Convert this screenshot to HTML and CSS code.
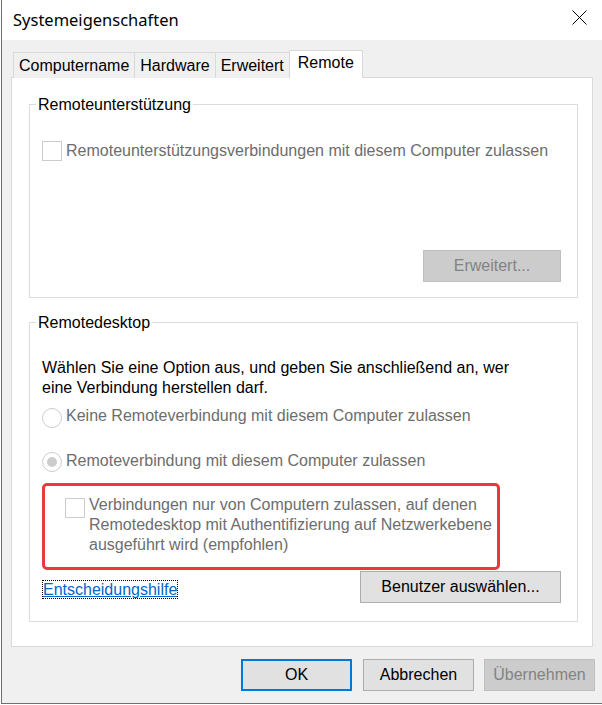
FILE: index.html
```html
<!DOCTYPE html>
<html lang="de">
<head>
<meta charset="utf-8">
<title>Systemeigenschaften</title>
<link rel="stylesheet" href="styles.css">
</head>
<body>
<div class="window">
  <div class="titlebar">
    <span class="title">Systemeigenschaften</span>
    <svg class="close" width="15" height="15" viewBox="0 0 15 15"><path d="M0.5 0.5 L14.5 14.5 M14.5 0.5 L0.5 14.5" stroke="#000" stroke-width="1" fill="none"/></svg>
  </div>
  <div class="main">
    <div class="tabs">
      <div class="tab">Computername</div>
      <div class="tab">Hardware</div>
      <div class="tab">Erweitert</div>
      <div class="tab active">Remote</div>
    </div>
    <div class="panel">
      <div class="group g1">
        <div class="group-title">Remoteunterstützung</div>
        <div class="check-row disabled g1-row">
          <span class="checkbox"></span><span class="label">Remoteunterstützungsverbindungen mit diesem Computer zulassen</span>
        </div>
        <div class="g1-actions"><button class="btn btn-disabled btn-erweitert">Erweitert...</button></div>
      </div>
      <div class="group g2">
        <div class="group-title">Remotedesktop</div>
        <p class="desc">Wählen Sie eine Option aus, und geben Sie anschließend an, wer<br>eine Verbindung herstellen darf.</p>
        <div class="radio-row disabled r1"><span class="radio"></span><span class="label">Keine Remoteverbindung mit diesem Computer zulassen</span></div>
        <div class="radio-row disabled r2"><span class="radio checked"></span><span class="label">Remoteverbindung mit diesem Computer zulassen</span></div>
        <div class="highlight">
          <div class="check-row disabled nla-row"><span class="checkbox"></span><span class="label">Verbindungen nur von Computern zulassen, auf denen<br>Remotedesktop mit Authentifizierung auf Netzwerkebene<br>ausgeführt wird (empfohlen)</span></div>
        </div>
        <div class="bottom-row">
          <a class="link" href="#">Entscheidungshilfe</a>
          <button class="btn btn-users">Benutzer auswählen...</button>
        </div>
      </div>
    </div>
  </div>
  <div class="footer">
    <button class="btn btn-footer btn-ok">OK</button>
    <button class="btn btn-footer btn-cancel">Abbrechen</button>
    <button class="btn btn-footer btn-disabled btn-apply">Übernehmen</button>
  </div>
</div>
</body>
</html>
```
FILE: styles.css
```css
html, body {
  margin: 0;
  padding: 0;
  background: #ffffff;
}

body {
  font-family: "Liberation Sans", Arial, sans-serif;
  font-size: 16px;
  color: #000;
}

.window {
  margin-left: 1px;
  width: 600px;
  height: 703px;
  border-left: 1px solid #6f6f6f;
  border-bottom: 1px solid #6f6f6f;
  background: #f0f0f0;
  display: flex;
  flex-direction: column;
}

.titlebar {
  height: 40px;
  flex: none;
  background: #ffffff;
  display: flex;
  justify-content: space-between;
  align-items: flex-start;
  padding: 0 15px 0 11px;
  box-sizing: border-box;
}

.title {
  font-family: "Noto Sans", "Open Sans", sans-serif;
  font-size: 16.5px;
  line-height: 22px;
  margin-top: 9px;
}

.close {
  margin-top: 10px;
  display: block;
}

.main {
  padding: 10px 9px 0;
}

.tabs {
  display: flex;
  align-items: flex-end;
  height: 28px;
  padding-left: 2px;
}

.tab {
  height: 26px;
  box-sizing: border-box;
  border: 1px solid #d9d9d9;
  border-bottom: none;
  padding: 3px 5px 0 5px;
  line-height: 20px;
  background: #f0f0f0;
  margin-left: -1px;
  white-space: nowrap;
}

.tab:first-child {
  margin-left: 0;
}

.tab.active {
  height: 28px;
  background: #ffffff;
  position: relative;
  z-index: 1;
  padding: 2px 8px 0 8px;
}

.panel {
  margin-top: -1px;
  height: 570px;
  box-sizing: border-box;
  background: #ffffff;
  border: 1px solid #d9d9d9;
  padding: 26px 14px 0 17px;
}

.group {
  border: 1px solid #dcdcdc;
  padding: 0 16px 15px 12px;
}

.group-title {
  width: fit-content;
  margin: -9px 0 0 -6px;
  padding: 0 2px;
  background: #ffffff;
  line-height: 18px;
  white-space: nowrap;
}

.check-row,
.radio-row {
  display: flex;
  align-items: flex-start;
  gap: 4px;
  line-height: 20px;
  white-space: nowrap;
}

.disabled .label {
  color: #6d6d6d;
}

.checkbox {
  flex: none;
  width: 20px;
  height: 20px;
  box-sizing: border-box;
  border: 1px solid #cccccc;
  background: #ffffff;
}

.g1-row {
  margin-top: 27px;
}

.g1-actions {
  display: flex;
  justify-content: flex-end;
  margin-top: 89px;
}

.btn {
  height: 32px;
  box-sizing: border-box;
  font-family: "Liberation Sans", Arial, sans-serif;
  font-size: 16px;
  border: 1px solid #adadad;
  background: #e1e1e1;
  color: #000;
  padding: 0;
  margin: 0;
  white-space: nowrap;
}

.btn-disabled {
  background: #cccccc;
  border-color: #bfbfbf;
  color: #838383;
}

.btn-erweitert {
  width: 138px;
}

.g2 {
  margin-top: 24px;
  padding-bottom: 18px;
}

.desc {
  margin: 26px 0 0;
  line-height: 20px;
  white-space: nowrap;
}

.radio {
  flex: none;
  width: 20px;
  height: 20px;
  box-sizing: border-box;
  border: 1px solid #cccccc;
  border-radius: 50%;
  background: #ffffff;
  display: flex;
  align-items: center;
  justify-content: center;
}

.radio.checked::after {
  content: "";
  width: 10px;
  height: 10px;
  border-radius: 50%;
  background: #cccccc;
}

.r1 {
  margin-top: 8px;
}

.r1 .radio {
  margin-top: 2px;
}

.r2 {
  margin-top: 23px;
}

.r2 .radio {
  margin-top: 1px;
}

.highlight {
  margin-top: 11px;
  width: 458px;
  box-sizing: border-box;
  border: 3px solid #e8393e;
  border-radius: 5px;
  padding: 9px 0 12px 20px;
}

.nla-row .checkbox {
  margin-top: 3px;
}

.bottom-row {
  display: flex;
  justify-content: space-between;
  align-items: flex-start;
  margin-top: 1px;
}

.link {
  margin-top: 9px;
  border: 1px dotted #000;
  color: #0066cc;
  text-decoration: underline;
  line-height: 17px;
  white-space: nowrap;
}

.btn-users {
  width: 201px;
}

.footer {
  display: flex;
  justify-content: flex-end;
  padding: 12px 7px 0 0;
}

.btn-footer {
  width: 111px;
}

.btn-ok {
  border: 2px solid #0078d7;
}

.btn-cancel {
  margin-left: 11px;
}

.btn-apply {
  margin-left: 10px;
}
```
